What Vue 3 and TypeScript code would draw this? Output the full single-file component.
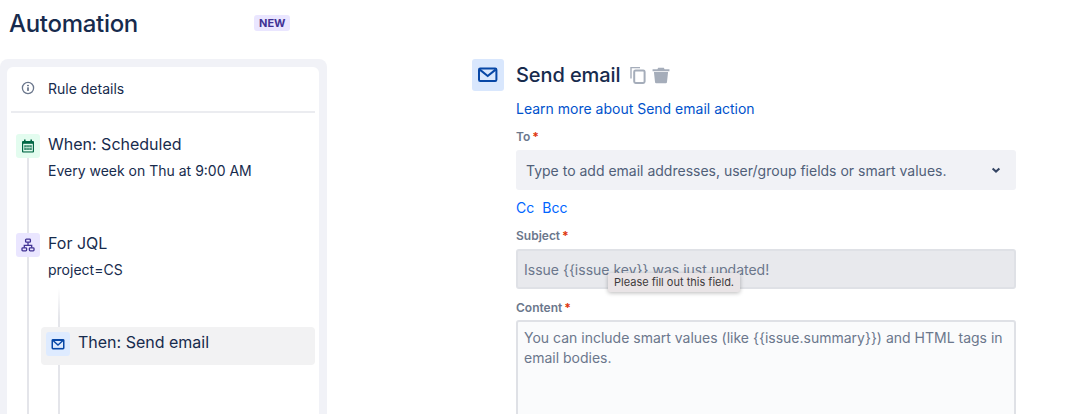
<template>
  <div class="page">
    <aside class="side">
      <div class="side-head">
        <h1 class="page-title">Automation</h1>
        <span class="lozenge">NEW</span>
      </div>

      <div class="rule-panel">
        <div class="rule-card">
          <div class="details-row">
            <svg class="info-icon" width="14" height="14" viewBox="0 0 14 14" fill="none">
              <circle cx="7" cy="7" r="5.6" stroke="#6b778c" stroke-width="1.3" />
              <rect x="6.3" y="6.2" width="1.4" height="3.8" rx=".4" fill="#42526e" />
              <circle cx="7" cy="4.5" r=".85" fill="#42526e" />
            </svg>
            <span>Rule details</span>
          </div>

          <div class="steps">
            <div class="step step-when">
              <span class="step-icon green">
                <svg width="16" height="16" viewBox="0 0 16 16">
                  <path d="M4 1.5h1.6V3h4.8V1.5H12V3h1a1 1 0 0 1 1 1v9.6a1 1 0 0 1-1 1H3a1 1 0 0 1-1-1V4a1 1 0 0 1 1-1h1z" fill="#006644" />
                  <rect x="3.2" y="5.8" width="9.6" height="7.6" fill="#e3fcef" />
                  <rect x="4.4" y="7.2" width="7.2" height="4.8" fill="#006644" />
                  <path d="M6.1 7.2v4.8M8 7.2v4.8M9.9 7.2v4.8M4.4 9.6h7.2" stroke="#e3fcef" stroke-width=".7" />
                </svg>
              </span>
              <div class="step-text">
                <div class="step-title">When: Scheduled</div>
                <div class="step-sub">Every week on Thu at 9:00 AM</div>
              </div>
            </div>

            <div class="step step-for">
              <span class="step-icon purple">
                <svg width="16" height="16" viewBox="0 0 16 16" fill="none" stroke="#403294" stroke-width="1.3">
                  <rect x="5.6" y="2.2" width="4.8" height="3" rx=".8" />
                  <rect x="2" y="10.8" width="4.6" height="3" rx=".8" />
                  <rect x="9.4" y="10.8" width="4.6" height="3" rx=".8" />
                  <path d="M8 5.2v3.2M4.3 10.8V8.4h7.4v2.4" />
                </svg>
              </span>
              <div class="step-text">
                <div class="step-title">For JQL</div>
                <div class="step-sub">project=CS</div>
              </div>
            </div>

            <div class="branch">
              <div class="step step-then">
                <span class="step-icon blue">
                  <svg width="16" height="16" viewBox="0 0 16 16">
                    <rect x="1.5" y="3" width="13" height="10.4" rx="1.4" fill="#0747a6" />
                    <rect x="3" y="5" width="10" height="6.9" fill="#deebff" />
                    <path d="M3 4.4 8 9l5-4.6" fill="none" stroke="#0747a6" stroke-width="1.4" />
                  </svg>
                </span>
                <div class="step-title">Then: Send email</div>
              </div>
            </div>
          </div>
        </div>
      </div>
    </aside>

    <main class="main">
      <span class="main-icon">
        <svg width="20" height="16" viewBox="0 0 20 16" fill="none">
          <rect x="1" y="1.5" width="17.4" height="12.4" rx="1.2" stroke="#0747a6" stroke-width="2" />
          <path d="M1.8 2.6 9.7 9l7.9-6.4" stroke="#0747a6" stroke-width="2" />
        </svg>
      </span>

      <form class="form" @submit.prevent>
        <div class="form-head">
          <h2 class="form-title">Send email</h2>
          <svg class="tool" width="16" height="18" viewBox="0 0 16 18" fill="none">
            <path d="M1 12.5V1.6h9" stroke="#a5adba" stroke-width="1.4" />
            <rect x="4.2" y="4.4" width="10.4" height="12.6" rx="1.4" stroke="#a5adba" stroke-width="2" />
          </svg>
          <svg class="tool trash" width="16" height="16" viewBox="0 0 16 16">
            <path d="M5.5 1.6h5l.7 1.2h4.3v1.8H.5V2.8h4.3z" fill="#a5adba" />
            <path d="M1.7 5.4h12.6l-1 9.1a1 1 0 0 1-1 .9H3.7a1 1 0 0 1-1-.9z" fill="#a5adba" />
          </svg>
        </div>

        <a class="learn" href="#">Learn more about Send email action</a>

        <label class="field-label to-label">To<span class="req">*</span></label>
        <div class="select">
          <span>Type to add email addresses, user/group fields or smart values.</span>
          <svg width="12" height="12" viewBox="0 0 12 12" fill="none">
            <path d="M2.6 4.4 6 7.6l3.4-3.2" stroke="#344563" stroke-width="2" />
          </svg>
        </div>

        <div class="copy-links">
          <a href="#">Cc</a>
          <a href="#">Bcc</a>
        </div>

        <label class="field-label subject-label">Subject<span class="req">*</span></label>
        <div class="subject-wrap">
          <input class="subject" type="text" :value="subject" disabled />
          <div class="validation">Please fill out this field.</div>
        </div>

        <label class="field-label content-label">Content<span class="req">*</span></label>
        <textarea class="content" :value="content" readonly></textarea>
      </form>
    </main>
  </div>
</template>

<script setup lang="ts">
const subject = 'Issue {{issue.key}} was just updated!'
const content = 'You can include smart values (like {{issue.summary}}) and HTML tags in email bodies.'
</script>

<style>
html,
body {
  margin: 0;
  background: #fff;
  overflow: hidden;
}
</style>

<style scoped>
.page {
  width: 1074px;
  height: 414px;
  overflow: hidden;
  display: flex;
  font-family: Inter, "Liberation Sans", sans-serif;
  color: #172b4d;
}

.side {
  width: 327px;
  flex: none;
}

.side-head {
  height: 59px;
  display: flex;
  align-items: flex-start;
  box-sizing: border-box;
  padding: 9px 0 0 9px;
}

.page-title {
  margin: 0;
  width: 245px;
  font-size: 24px;
  line-height: 30px;
  font-weight: 500;
  letter-spacing: -0.3px;
}

.lozenge {
  margin-top: 6px;
  height: 16px;
  padding: 0 5px;
  border-radius: 3px;
  background: #eae6ff;
  color: #403294;
  font-size: 11px;
  line-height: 16px;
  font-weight: 700;
}

.rule-panel {
  height: 355px;
  box-sizing: border-box;
  padding: 8px 8px 0 7px;
  background: #f1f2f7;
  border-radius: 8px 8px 0 0;
}

.rule-card {
  height: 100%;
  background: #fff;
  border-radius: 6px 6px 0 0;
  padding: 0 4px;
  box-sizing: border-box;
}

.details-row {
  height: 46px;
  box-sizing: border-box;
  padding: 0 0 2px 10px;
  margin-bottom: 0;
  border-bottom: 2px solid #ebecf0;
  display: flex;
  align-items: center;
  gap: 13px;
  font-size: 14px;
}

.steps {
  position: relative;
  padding: 21px 0 0 5px;
}

.steps::before {
  content: "";
  position: absolute;
  left: 16px;
  top: 45px;
  height: 300px;
  width: 2px;
  background: #e4e5ea;
}

.step {
  position: relative;
  display: flex;
  gap: 8px;
}

.step-icon {
  flex: none;
  width: 24px;
  height: 24px;
  border-radius: 3px;
  display: flex;
  align-items: center;
  justify-content: center;
}

.green {
  background: #e3fcef;
}

.purple {
  background: #eae6ff;
}

.blue {
  background: #deebff;
  position: relative;
}

.step-text {
  min-width: 0;
}

.step-title {
  font-size: 16px;
  line-height: 20px;
}

.step-sub {
  margin-top: 8px;
  font-size: 14px;
  line-height: 18px;
}

.step-when {
  height: 99px;
}

.step-for {
  height: 94px;
}

.branch {
  position: relative;
  margin-left: 25px;
}

.branch::before {
  content: "";
  position: absolute;
  left: 17px;
  top: -39px;
  height: 190px;
  width: 2px;
  background: linear-gradient(to bottom, #fff, #e4e5ea 30px);
}

.step-then {
  width: 274px;
  height: 38px;
  box-sizing: border-box;
  padding: 5px;
  border-radius: 4px;
  background: #f2f2f3;
}

.main {
  margin-left: 145px;
  width: 544px;
  padding-top: 59px;
  display: flex;
  gap: 12px;
  align-items: flex-start;
}

.main-icon {
  flex: none;
  width: 32px;
  height: 32px;
  border-radius: 3px;
  background: #d9e7fd;
  display: flex;
  align-items: center;
  justify-content: center;
}

.form {
  width: 500px;
  display: flex;
  flex-direction: column;
}

.form-head {
  height: 32px;
  display: flex;
  align-items: center;
}

.form-title {
  margin: 0 10px 0 0;
  font-size: 20px;
  line-height: 32px;
  font-weight: 500;
  letter-spacing: -0.1px;
}

.tool {
  flex: none;
}

.trash {
  margin-left: 6px;
  width: 18px;
  height: 18px;
}

.learn {
  margin-top: 8px;
  font-size: 14px;
  line-height: 20px;
  color: #0052cc;
  text-decoration: none;
}

.field-label {
  font-size: 12px;
  line-height: 16px;
  font-weight: 600;
  color: #6b778c;
}

.req {
  margin-left: 2px;
  color: #de350b;
  font-weight: 700;
}

.to-label {
  margin-top: 10px;
}

.select {
  margin-top: 5px;
  height: 40px;
  box-sizing: border-box;
  padding: 0 14px 0 10px;
  border-radius: 3px;
  background: #f1f2f6;
  display: flex;
  align-items: center;
  justify-content: space-between;
  font-size: 14px;
  color: #505f79;
}

.copy-links {
  margin-top: 10px;
  display: flex;
  gap: 8px;
  font-size: 14px;
  line-height: 16px;
}

.copy-links a {
  color: #0065ff;
  text-decoration: none;
}

.subject-label {
  margin-top: 12px;
}

.subject-wrap {
  position: relative;
  margin-top: 5px;
  height: 40px;
}

.subject {
  width: 100%;
  height: 40px;
  box-sizing: border-box;
  padding: 0 6px;
  border: 2px solid #dfe1e6;
  border-radius: 3px;
  background: #e8e9ed;
  font: 14px Inter, "Liberation Sans", sans-serif;
  color: #6b778c;
  opacity: 1;
}

.validation {
  position: absolute;
  left: 92px;
  top: 24px;
  height: 19px;
  padding: 0 6px;
  box-sizing: border-box;
  white-space: nowrap;
  border-radius: 2px;
  background: #e9e4e6;
  box-shadow: 0 1px 4px rgba(0, 0, 0, 0.28);
  font-size: 11px;
  line-height: 19px;
  color: #3d3a3c;
}

.content-label {
  margin-top: 11px;
}

.content {
  margin-top: 4px;
  width: 100%;
  height: 140px;
  box-sizing: border-box;
  padding: 6px;
  border: 2px solid #dfe1e6;
  border-radius: 3px;
  background: #fafbfc;
  font: 14px/20px Inter, "Liberation Sans", sans-serif;
  color: #6b778c;
  resize: none;
  outline: none;
}
</style>
